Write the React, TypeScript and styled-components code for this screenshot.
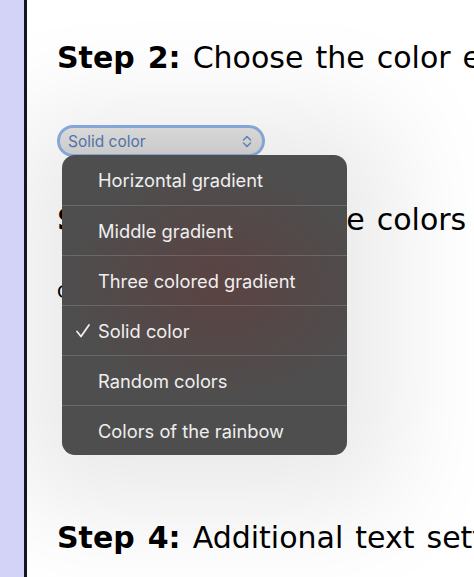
import React from 'react';
import styled, { createGlobalStyle } from 'styled-components';

const GlobalStyle = createGlobalStyle`
  html, body {
    margin: 0;
    padding: 0;
    background: #ffffff;
  }
`;

const effects = [
  'Horizontal gradient',
  'Middle gradient',
  'Three colored gradient',
  'Solid color',
  'Random colors',
  'Colors of the rainbow',
];

const Page = styled.div`
  display: flex;
  height: 577px;
  overflow: hidden;
  font-family: 'DejaVu Sans', Verdana, sans-serif;
  color: #000;
`;

const Sidebar = styled.aside`
  width: 24px;
  flex-shrink: 0;
  background: #d3d3f7;
  border-right: 3px solid #16161f;
`;

const Main = styled.main`
  position: relative;
  flex: 1;
  padding-left: 30px;
  white-space: nowrap;
  overflow: hidden;
`;

const Heading = styled.h2<{ $top: number }>`
  margin: ${(p) => p.$top}px 0 0;
  font-size: 30px;
  line-height: 36px;
  font-weight: normal;
  word-spacing: 2.5px;

  b {
    font-weight: bold;
  }
`;

const Text = styled.p<{ $top: number }>`
  margin: ${(p) => p.$top}px 0 0;
  font-size: 18px;
  line-height: 22px;
`;

const Select = styled.div`
  display: flex;
  align-items: center;
  justify-content: space-between;
  box-sizing: border-box;
  width: 208px;
  height: 32px;
  margin-top: 49px;
  padding: 0 10px 0 8px;
  border: 3px solid #8cafe2;
  border-radius: 16px;
  background: linear-gradient(#e4e4e4, #d8d8d8);
  font-family: 'Inter', 'Liberation Sans', sans-serif;
  font-size: 15.5px;
  color: #5679b3;
`;

const Menu = styled.ul`
  position: absolute;
  left: 35px;
  top: 155px;
  width: 285px;
  margin: 0;
  padding: 0;
  list-style: none;
  border-radius: 13px;
  overflow: hidden;
  background:
    radial-gradient(ellipse 160px 120px at 55% 43%, rgba(110, 50, 50, 0.42), rgba(110, 50, 50, 0)),
    #4e4e4e;
  box-shadow: 0 6px 110px 50px rgba(0, 0, 0, 0.085);
  font-family: 'Inter', 'Liberation Sans', sans-serif;
  font-size: 18.3px;
  color: #efefef;
`;

const MenuItem = styled.li`
  position: relative;
  display: flex;
  align-items: center;
  height: 50px;
  padding-left: 36px;
  box-sizing: border-box;

  & + & {
    border-top: 1px solid rgba(255, 255, 255, 0.16);
  }
`;

const Check = styled.svg`
  position: absolute;
  left: 13px;
  top: 50%;
  margin-top: -8px;
`;

const Chevrons = () => (
  <svg width="10" height="13" viewBox="0 0 10 13" fill="none" stroke="#6c8dc0" strokeWidth="1.6" strokeLinecap="round" strokeLinejoin="round">
    <path d="M1.5 5 L5 1.5 L8.5 5" />
    <path d="M1.5 8 L5 11.5 L8.5 8" />
  </svg>
);

export default function App() {
  const selected = 'Solid color';

  return (
    <>
      <GlobalStyle />
      <Page>
        <Sidebar />
        <Main>
          <Heading $top={40}>
            <b>Step 2:</b> Choose the color effect
          </Heading>
          <Select>
            <span>{selected}</span>
            <Chevrons />
          </Select>
          <Heading $top={45}>
            <b>Step 3:</b> Choose the colors
          </Heading>
          <Text $top={43}>Color 1:</Text>
          <Heading $top={217}>
            <b>Step 4:</b> Additional text settings
          </Heading>

          <Menu>
            {effects.map((effect) => (
              <MenuItem key={effect}>
                {effect === selected && (
                  <Check width="16" height="16" viewBox="0 0 16 16" fill="none" stroke="#efefef" strokeWidth="1.8" strokeLinecap="round" strokeLinejoin="round">
                    <path d="M2 8.5 L6 13.5 L14 2" />
                  </Check>
                )}
                {effect}
              </MenuItem>
            ))}
          </Menu>
        </Main>
      </Page>
    </>
  );
}
